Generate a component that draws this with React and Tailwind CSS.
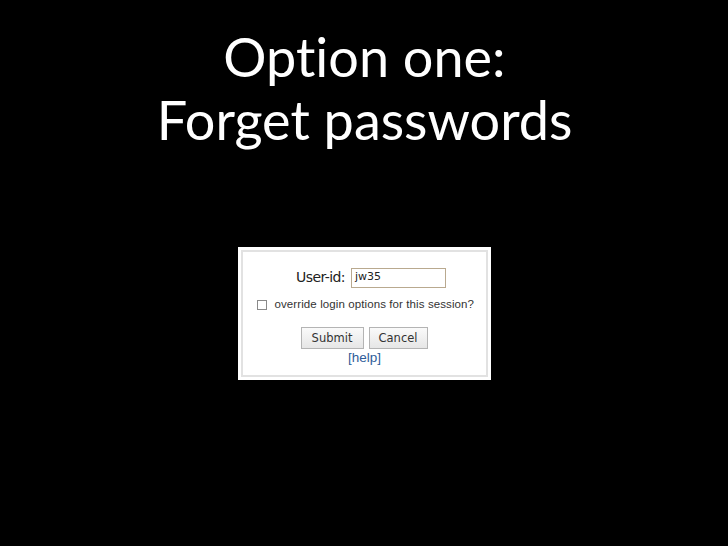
import React from 'react'

const App = () => {
  return (
    <div className="w-[728px] h-[546px] bg-black flex flex-col items-center overflow-hidden">
      <h1 className="mt-[25px] ml-[1px] text-white text-center font-['Lato',sans-serif] font-normal text-[54px] leading-[63px] [font-variant-ligatures:none]">
        Option one:
        <br />
        Forget passwords
      </h1>

      <div className="mt-[96px] w-[253px] h-[133px] bg-white p-[3px]">
        <div className="w-full h-full border-2 border-[#e2e2e2] flex flex-col items-center font-['DejaVu_Sans',sans-serif]">
          <div className="mt-[15px] flex items-center gap-[6px] pl-[14px]">
            <span className="text-[14px] text-[#222] tracking-[-0.6px]">User-id:</span>
            <div className="w-[95px] h-[20px] border border-[#b9a98f] flex items-center px-[3px] text-[11px] text-[#222]">
              jw35
            </div>
          </div>

          <div className="mt-[8px] self-start ml-[14px] flex items-center gap-[8px]">
            <span className="w-[10px] h-[10px] border border-[#8a8a8a] bg-white" />
            <span className="text-[11.5px] text-[#333] font-['Liberation_Sans',sans-serif] tracking-[0.1px]">
              override login options for this session?
            </span>
          </div>

          <div className="mt-[14px] flex gap-[5px]">
            <button className="w-[63px] h-[22px] bg-gradient-to-b from-[#fafafa] to-[#e6e6e6] border border-[#b4b4b4] text-[11.5px] text-[#333]">
              Submit
            </button>
            <button className="w-[59px] h-[22px] bg-gradient-to-b from-[#fafafa] to-[#e6e6e6] border border-[#b4b4b4] text-[11.5px] text-[#333]">
              Cancel
            </button>
          </div>

          <a className="-mt-[1px] ml-[1px] text-[13.5px] text-[#2e5c99] font-['Liberation_Sans',sans-serif]">[help]</a>
        </div>
      </div>
    </div>
  )
}

export default App
